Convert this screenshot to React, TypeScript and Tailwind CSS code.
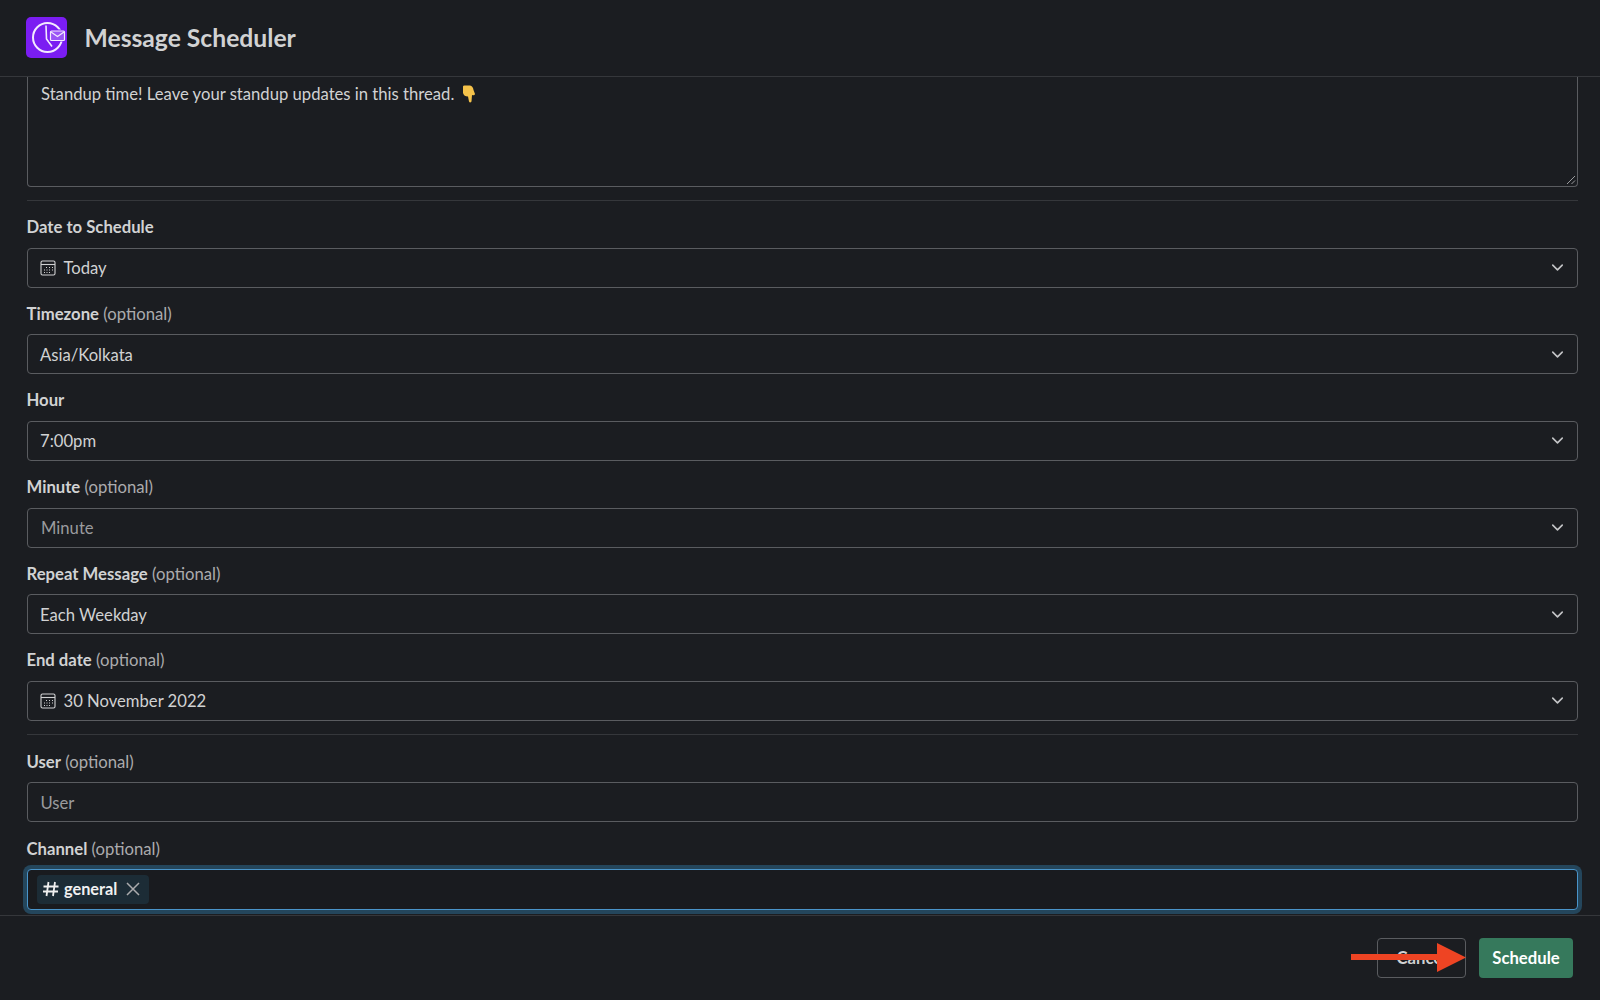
import { ChevronDown } from "lucide-react"

function Logo() {
    return (
        <svg viewBox="0 0 41 41" className="w-[41px] h-[41px] shrink-0">
            <rect width="41" height="41" rx="5" fill="#7b1df2" />
            <circle cx="21.5" cy="20.5" r="14.5" fill="none" stroke="#f3eafe" strokeWidth="2" />
            <path d="M20 8.5 L20.5 22 L26 29.5" fill="none" stroke="#f3eafe" strokeWidth="1.6" />
            <rect x="23" y="12.5" width="17" height="12" fill="#7b1df2" />
            <rect x="24.5" y="14" width="14" height="9.5" rx="1" fill="#9a56f5" stroke="#f3eafe" strokeWidth="1.2" />
            <path d="M25 15 L31.5 19.5 L38 15" fill="none" stroke="#f3eafe" strokeWidth="1.2" />
        </svg>
    )
}

function CalendarIcon() {
    return (
        <svg viewBox="0 0 16 16" className="w-[16px] h-[16px] shrink-0 text-[#d1d2d3]" fill="none" stroke="currentColor">
            <rect x="1" y="1" width="14" height="14" rx="1.5" strokeWidth="1.1" />
            <path d="M1 4.5 H15" strokeWidth="1.1" />
            <path d="M6 7.5h1M9 7.5h1M12 7.5h1M4 10h1M6.5 10h1M9 10h1M12 10h1M4 12.5h1M6.5 12.5h1M9 12.5h1" strokeWidth="1.2" />
        </svg>
    )
}

function Label({ name, optional }: { name: string; optional?: boolean }) {
    return (
        <div className="h-[24px] leading-[24px] mb-[8.5px] text-[16.7px] whitespace-nowrap">
            <span className="font-bold text-[#d1d2d3]">{name}</span>
            {optional && <span className="text-[#ababad]"> (optional)</span>}
        </div>
    )
}

function Select({ label, optional, value, placeholder, calendar }: { label: string; optional?: boolean; value: string; placeholder?: boolean; calendar?: boolean }) {
    return (
        <div className="mt-[14.17px]">
            <Label name={label} optional={optional} />
            <div className="h-[40px] flex items-center border border-[#5a5c60] rounded-[4px] pl-[12.5px] pr-[10px]">
                {calendar && <span className="mr-[7.5px]"><CalendarIcon /></span>}
                <span className={`text-[16.65px] pt-[2px] ${placeholder ? "text-[#9a9b9e] pl-px" : "text-[#d1d2d3]"}`}>{value}</span>
                <ChevronDown className="ml-auto w-[19px] h-[19px] text-[#c4c5c7]" strokeWidth={2} />
            </div>
        </div>
    )
}

export default function App() {
    return (
        <div className="h-[1000px] w-full flex flex-col bg-[#1b1d21] overflow-hidden font-['Lato',sans-serif]">
            <div className="h-[77px] shrink-0 flex items-center gap-[17.5px] pl-[26px] pb-[1px] border-b border-[#35373b]">
                <Logo />
                <h1 className="text-[24.7px] font-bold text-[#d1d2d3]">Message Scheduler</h1>
            </div>

            <div className="h-[838px] shrink-0 overflow-hidden pl-[26.5px] pr-[22.5px]">
                <div className="h-[110px] relative border-x border-b border-[#5a5c60] rounded-b-[4px] pl-[13.5px] pt-[4px] flex items-start gap-[8px] text-[16.65px] leading-[26px] text-[#d1d2d3]">
                    <span>Standup time! Leave your standup updates in this thread.</span>
                    <svg viewBox="0 0 14 18" className="w-[14px] h-[18px] mt-[4px]">
                        <path d="M1 1.5 Q1 0.5 2.5 0.5 H8 Q11 1 11.5 5 L13 9 Q12.5 11 10 10 L9.5 16.5 Q8 18.5 7 16.5 L6 11.5 Q2 11.5 1 8Z" fill="#f5c24a" />
                    </svg>
                    <svg viewBox="0 0 10 10" className="absolute right-[1px] bottom-[1px] w-[10px] h-[10px]" stroke="#9a9b9e" fill="none">
                        <path d="M1 9 L9 1 M5.5 9 L9 5.5" />
                    </svg>
                </div>

                <div className="h-px bg-[#35373b] mt-[13px]" />

                <div className="mt-[1px]">
                    <Select label="Date to Schedule" value="Today" calendar />
                    <Select label="Timezone" optional value="Asia/Kolkata" />
                    <Select label="Hour" value="7:00pm" />
                    <Select label="Minute" optional value="Minute" placeholder />
                    <Select label="Repeat Message" optional value="Each Weekday" />
                    <Select label="End date" optional value="30 November 2022" calendar />
                </div>

                <div className="h-px bg-[#35373b] mt-[13px]" />

                <div className="mt-[14.7px]">
                    <Label name="User" optional />
                    <div className="h-[40px] flex items-center border border-[#5a5c60] rounded-[4px] pl-[13px]">
                        <span className="text-[16.65px] pt-[2px] text-[#9a9b9e]">User</span>
                    </div>
                </div>

                <div className="mt-[15px]">
                    <div className="-mb-[1px]">
                        <Label name="Channel" optional />
                    </div>
                    <div className="h-[41px] flex items-center bg-[#191b1f] border border-[#4a94c9] rounded-[4px] pl-[9.5px] ring-4 ring-[#24465c]">
                        <div className="h-[29px] flex items-center rounded-[4px] bg-[#1c2c36] pl-[6px] pr-[9px]">
                            <svg viewBox="0 0 16 16" className="w-[16px] h-[16px] mr-[5px]" stroke="#f0f0f0" strokeWidth="1.8" fill="none">
                                <path d="M5.5 1 L3.5 15 M12 1 L10 15 M0.5 5.5 H15.5 M0 10.5 H15" />
                            </svg>
                            <span className="text-[16.3px] font-bold text-[#f0f0f0]">general</span>
                            <svg viewBox="0 0 14 14" className="w-[14px] h-[14px] ml-[9px]" stroke="#ababad" strokeWidth="1.5" fill="none">
                                <path d="M1 1 L13 13 M13 1 L1 13" />
                            </svg>
                        </div>
                    </div>
                </div>
            </div>

            <div className="flex-1 relative border-t border-[#35373b] flex justify-end items-start gap-[13px] pt-[22px] pr-[27px]">
                <button className="w-[89px] h-[40px] pt-px border border-[#5a5c60] rounded-[4px] text-[16.7px] font-bold text-[#d1d2d3]">Cancel</button>
                <button className="w-[94px] h-[40px] pt-px rounded-[4px] bg-[#36795c] text-[16.7px] font-bold text-white">Schedule</button>
                <svg viewBox="0 0 116 30" className="absolute left-[1351px] top-[27px] w-[116px] h-[30px]">
                    <path d="M0 11 H86 V0 L115 14.5 L86 29 V17 H0Z" fill="#ee4423" />
                </svg>
            </div>
        </div>
    )
}
